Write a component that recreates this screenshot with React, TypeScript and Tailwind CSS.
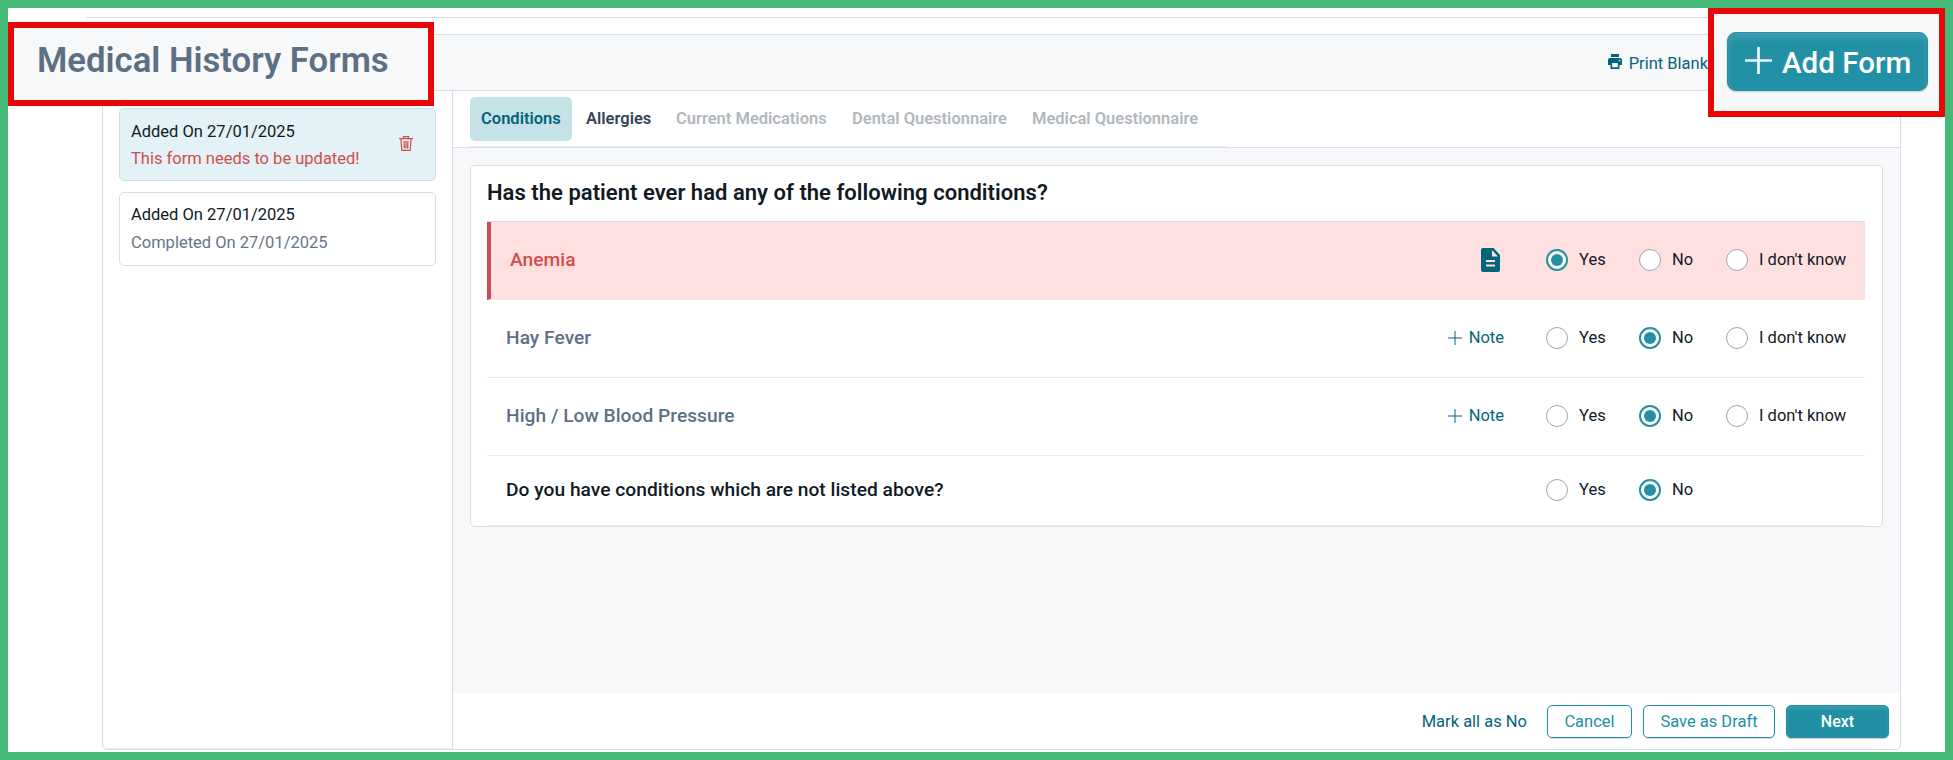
import type { ReactNode } from 'react';

type Answer = 'Yes' | 'No' | "I don't know";

function Radio({ label, checked, className }: { label: Answer; checked: boolean; className: string }) {
  return (
    <label className={`flex shrink-0 items-center gap-[11px] ${className}`}>
      <span
        className={`flex size-[22px] shrink-0 items-center justify-center rounded-full bg-white ${
          checked ? 'border-2 border-[#2190a4]' : 'border border-[#98a6b5]'
        }`}
      >
        {checked && <span className="size-[12px] rounded-full bg-[#2190a4]" />}
      </span>
      <span className="whitespace-nowrap text-[16.5px] leading-5 text-[#111a24]">{label}</span>
    </label>
  );
}

function Plus({ className, path }: { className: string; path: string }) {
  return (
    <svg viewBox="0 0 14 14" className={className} fill="currentColor">
      <path d={path} />
    </svg>
  );
}

const THIN_PLUS = 'M6.500 0h1v6.500H14v1H7.500V14h-1V7.500H0v-1h6.500z';
const PLUS = 'M6.300 0h1.400v6.300H14v1.400H7.700V14H6.300V7.700H0V6.300h6.300z';

function NoteIcon() {
  return (
    <svg viewBox="0 0 19 24" className="mr-1 h-6 w-[19px]">
      <path fill="#03657a" d="M2 0h10.500L19 7v15a2 2 0 0 1-2 2H2a2 2 0 0 1-2-2V2a2 2 0 0 1 2-2z" />
      <path fill="#fee0e0" d="M11 2v6.500h6zM5 12h9v2H5zM5 16.500h9v2H5z" />
    </svg>
  );
}

function NoteLink() {
  return (
    <button className="flex items-center gap-[7px] text-[#03657a]">
      <Plus path={THIN_PLUS} className="size-[14px]" />
      <span className="text-[16.5px] leading-5">Note</span>
    </button>
  );
}

function Row({
  label,
  answer,
  labelClass,
  className,
  action,
  options = ['Yes', 'No', "I don't know"],
}: {
  label: string;
  answer: Answer;
  labelClass: string;
  className: string;
  action?: ReactNode;
  options?: Answer[];
}) {
  const widths: Record<Answer, string> = { Yes: 'w-[93px]', No: 'w-[87px]', "I don't know": 'w-[139px]' };
  return (
    <div className={`flex items-center border-b border-[#eaecee] pb-px ${className}`}>
      <span className={`flex-1 text-[19.2px] font-medium leading-6 tracking-[0.02px] ${labelClass}`}>{label}</span>
      <div className="flex w-[100px] justify-end whitespace-nowrap pr-[42px]">{action}</div>
      <div className="flex w-[319px]">
        {options.map((o) => (
          <Radio key={o} label={o} checked={o === answer} className={widths[o]} />
        ))}
      </div>
    </div>
  );
}

function Tab({ children, className }: { children: ReactNode; className: string }) {
  return (
    <button className={`h-11 whitespace-nowrap rounded-[5px] pt-0.5 text-left text-[16.5px] font-semibold ${className}`}>
      {children}
    </button>
  );
}

export default function App() {
  return (
    <div className="relative h-[760px] w-[1953px] overflow-hidden border-8 border-[#45b978] bg-white font-['Roboto',sans-serif]">
      <div className="ml-[78px] mt-[9px] h-px bg-[#d9dee6]" />
      <div className="ml-[94px] mt-4 flex h-[716px] w-[1799px] flex-col rounded-[5px] border border-[#d9dfe8]">
        <header className="flex h-[56px] shrink-0 items-center justify-end border-b border-[#d9dfe8] bg-[#f7f8fa]">
          <div className="mr-[192px] flex items-center gap-[7px] whitespace-nowrap pt-0.5 text-[#03657a]">
            <svg viewBox="0 0 14 15" className="-mt-1 h-[15px] w-[14px]">
              <path
                fill="currentColor"
                fillRule="evenodd"
                d="M3 0h8v3H3zM2 4h10a2 2 0 0 1 2 2v5h-2.500v4h-9v-4H0V6a2 2 0 0 1 2-2zm2.200 5v4.300h5.600V9zM11.500 5.700a.8.8 0 1 0 0 1.600.8.800 0 0 0 0-1.600z"
              />
            </svg>
            <span className="text-[16.5px] leading-5">Print Blank</span>
          </div>
        </header>
        <div className="flex min-h-0 flex-1">
          <aside className="flex w-[350px] shrink-0 flex-col gap-[11px] rounded-bl-[5px] border-r border-b border-r-[#d9dfe8] border-b-[#eaecee] pl-4 pt-[17px] text-[16.5px]">
            <div className="flex h-[73px] w-[317px] items-center justify-between rounded-[5px] border border-[#c5e2e6] bg-[#e3f2f6] pl-[11px] pr-[22px]">
              <div className="leading-[27px]">
                <p className="text-[#111a24]">Added On 27/01/2025</p>
                <p className="text-[#d24c4e]">This form needs to be updated!</p>
              </div>
              <svg viewBox="0 0 14 15" className="-mt-0.5 h-[15px] w-[14px]" fill="none" stroke="#d24c4e" strokeWidth="1.2">
                <path d="M0 2.700h14M4.500 2.500V.700h5v1.800M1.900 3l.9 11.300h8.400L12.100 3M5.100 5l.2 7.500M7 5v7.500M8.900 5l-.2 7.500" />
              </svg>
            </div>
            <div className="h-[74px] w-[317px] rounded-[5px] border border-[#d9dfe8] pl-[11px] pt-[8px] leading-7">
              <p className="text-[#111a24]">Added On 27/01/2025</p>
              <p className="text-[#66758a]">Completed On 27/01/2025</p>
            </div>
          </aside>
          <main className="flex flex-1 flex-col">
            <nav className="flex h-[57px] shrink-0 flex-col border-b border-[#d9dfe8] pl-[17px]">
              <div className="flex h-[56px] w-[756px] shrink-0 items-center border-b border-[#eaecee]">
                <Tab className="mr-[14px] w-[102px] bg-[#c5e2e6] pl-[11px] text-[#03657a]">Conditions</Tab>
                <Tab className="w-[90px] text-[#334358]">Allergies</Tab>
                <Tab className="w-[176px] text-[#b0b7be]">Current Medications</Tab>
                <Tab className="w-[180px] text-[#b0b7be]">Dental Questionnaire</Tab>
                <Tab className="text-[#b0b7be]">Medical Questionnaire</Tab>
              </div>
            </nav>
            <div className="h-[546px] shrink-0 bg-[#f7f8fa] px-[17px] pt-[17px]">
              <section className="h-[362px] rounded-[5px] border border-[#d9dfe8] bg-white pl-4 pr-[17px]">
                <h2 className="h-[56px] border-b border-[#d9dfe8] pt-[13px] text-[22px] font-semibold leading-[28px] tracking-[0.03px] text-[#111a24]">
                  Has the patient ever had any of the following conditions?
                </h2>
                <Row
                  label="Anemia"
                  answer="Yes"
                  className="h-[78px] border-l-4 border-l-[#d24c4e] bg-[#fee0e0] pl-[19px]"
                  labelClass="text-[#d24c4e]"
                  action={<NoteIcon />}
                />
                <Row label="Hay Fever" answer="No" className="h-[78px] pl-[19px]" labelClass="text-[#5d7086]" action={<NoteLink />} />
                <Row
                  label="High / Low Blood Pressure"
                  answer="No"
                  className="h-[78px] pl-[19px]"
                  labelClass="text-[#5d7086]"
                  action={<NoteLink />}
                />
                <Row
                  label="Do you have conditions which are not listed above?"
                  answer="No"
                  className="h-[70px] pl-[19px]"
                  labelClass="text-[#111a24]"
                  options={['Yes', 'No']}
                />
              </section>
            </div>
            <footer className="flex flex-1 items-center justify-end pr-[11px] text-[16.5px] leading-5">
              <button className="mr-5 whitespace-nowrap text-[#03657a]">Mark all as No</button>
              <button className="mr-[11px] h-[33px] w-[85px] rounded-[5px] border border-[#2190a4] text-[#2190a4] shadow-[0_1px_1px_rgba(0,0,0,0.15)]">
                Cancel
              </button>
              <button className="mr-[11px] h-[33px] w-[132px] rounded-[5px] border border-[#2190a4] text-[#2190a4] shadow-[0_1px_1px_rgba(0,0,0,0.15)]">
                Save as Draft
              </button>
              <button className="h-[33px] w-[103px] rounded-[5px] border border-[#2190a4] bg-[#2190a4] text-[16px] font-medium text-white shadow-[inset_0_3px_3px_rgba(255,255,255,0.12),0_1px_1px_rgba(0,0,0,0.2)]">
                Next
              </button>
            </footer>
          </main>
        </div>
      </div>

      <div className="absolute left-0 top-[14px] h-[84px] w-[426px] border-[6px] border-[#ea0606] bg-[#f7f8fa] pl-[23px] pt-[12px]">
        <h1 className="whitespace-nowrap text-[34.7px] font-semibold leading-[40px] text-[#5c6f83]">Medical History Forms</h1>
      </div>
      <div className="absolute right-0 top-0 h-[109px] w-[237px] border-[6px] border-[#ea0606] bg-[#f7f8fa] pl-[13px] pt-[18px]">
        <button className="flex h-[59px] w-[201px] items-center rounded-[9px] border border-[#2190a4] bg-[#2391a5] pl-[17px] text-white shadow-[inset_0_5px_6px_rgba(255,255,255,0.12),0_1px_2px_rgba(0,0,0,0.2)]">
          <Plus path={PLUS} className="-mt-[3px] mr-[10px] size-[27px] opacity-90" />
          <span className="whitespace-nowrap pt-0.5 text-[29.6px] font-medium leading-9">Add Form</span>
        </button>
      </div>
    </div>
  );
}
